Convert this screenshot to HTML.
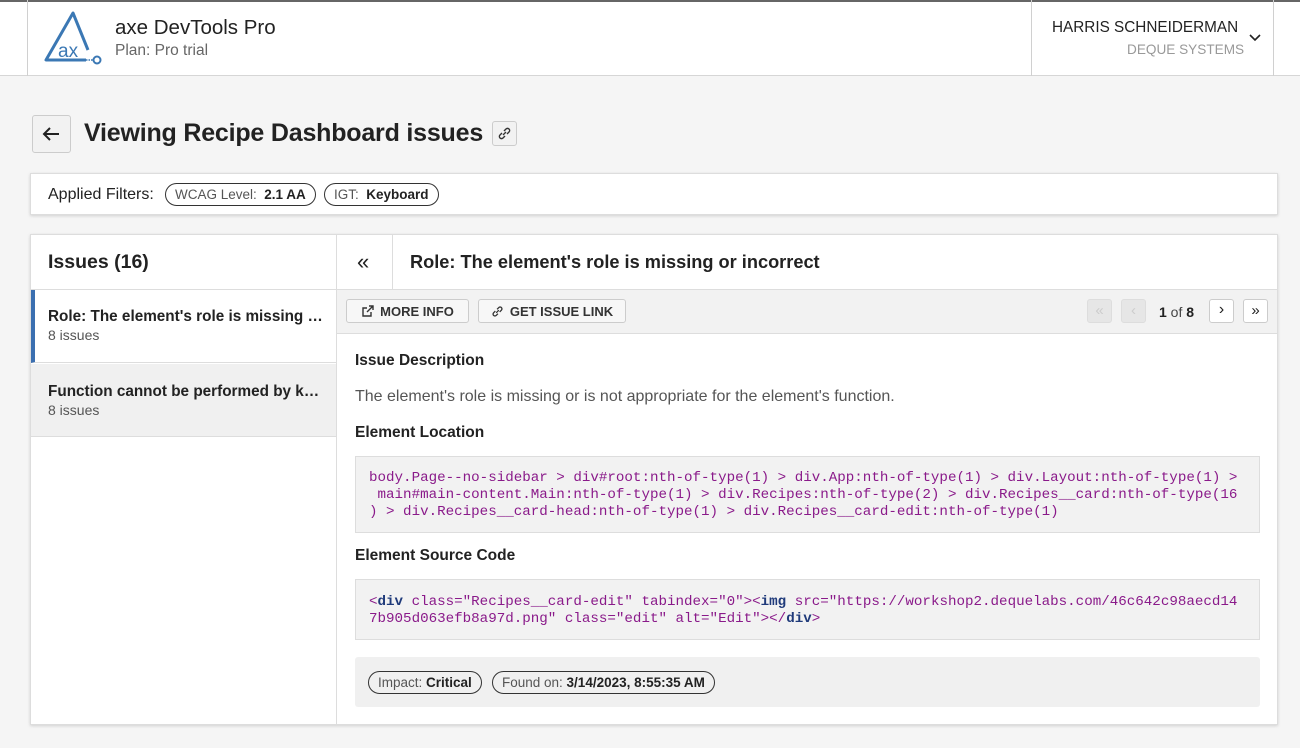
<!DOCTYPE html>
<html><head><meta charset="utf-8"><style>
*{box-sizing:border-box;margin:0;padding:0}
body{width:1300px;height:748px;background:#f5f5f5;font-family:"Liberation Sans",Arial,sans-serif;color:#222;position:relative;overflow:hidden}
.a{position:absolute;white-space:nowrap}
.hdr{left:0;top:0;width:1300px;height:76px;background:#fff;border-top:2px solid #666;border-bottom:1px solid #d6d6d6}
.vl{top:0;width:1px;height:76px;background:#d0d0d0}
.btn{background:#f2f2f2;border:1px solid #ccc;border-radius:3px}
.pill{display:inline-block;border:1px solid #333;border-radius:12px;padding:2px 9px;font-size:13.5px;color:#555;line-height:17px}
.pill b{color:#222}
.code{font-family:"Liberation Mono",monospace;font-size:14.2px;line-height:17px;color:#8a1a8a;white-space:pre;background:#f2f2f2;border:1px solid #ddd}
.code b{color:#1f3a7a}
.tb{font-size:13px;font-weight:bold;color:#333;display:flex;align-items:center;justify-content:center;gap:6px}
.h{font-size:15.5px;font-weight:bold;color:#222}
</style></head><body>
<div class="a hdr"></div>
<div class="a vl" style="left:27px"></div>
<div class="a vl" style="left:1031px"></div>
<div class="a vl" style="left:1273px"></div>
<svg class="a" style="left:44px;top:10px" width="60" height="56" viewBox="0 0 60 56">
<path d="M44 40 L29 3 L2 50 L42 50" fill="none" stroke="#3b78b4" stroke-width="3" stroke-linejoin="round"/>
<path d="M42 50 L50 50" stroke="#3b78b4" stroke-width="1.5" stroke-dasharray="1.5 1"/>
<circle cx="53" cy="50" r="3.5" fill="#fff" stroke="#3b78b4" stroke-width="2"/>
<text x="14" y="47" font-family="Liberation Sans" font-size="19" fill="#3b78b4">ax</text>
</svg>
<div class="a" style="left:115px;top:16px;font-size:20.5px;color:#222">axe DevTools Pro</div>
<div class="a" style="left:115px;top:42px;font-size:15.5px;color:#666">Plan: Pro trial</div>
<div class="a" style="left:1052px;top:19px;font-size:15.3px;color:#222">HARRIS SCHNEIDERMAN</div>
<div class="a" style="left:1127px;top:42px;font-size:13.6px;color:#999">DEQUE SYSTEMS</div>
<svg class="a" style="left:1248px;top:33px" width="14" height="10"><path d="M2 2 L7 7 L12 2" fill="none" stroke="#222" stroke-width="1.6"/></svg>

<div class="a btn" style="left:32px;top:115px;width:39px;height:38px"></div>
<svg class="a" style="left:41px;top:124px" width="20" height="20"><path d="M18 10H3M9 4L3 10L9 16" fill="none" stroke="#222" stroke-width="2"/></svg>
<div class="a" style="left:84px;top:119px;font-size:25px;font-weight:bold;color:#222;letter-spacing:-0.2px">Viewing Recipe Dashboard issues</div>
<div class="a btn" style="left:492px;top:121px;width:25px;height:25px"></div>
<svg class="a" style="left:497px;top:126px" width="15" height="15" viewBox="0 0 15 15"><path d="M6 9L9 6M5 7L3 9a2 2 0 0 0 3 3l2-2M10 8l2-2a2 2 0 0 0-3-3L7 5" fill="none" stroke="#333" stroke-width="1.4"/></svg>

<div class="a" style="left:30px;top:173px;width:1248px;height:42px;background:#fff;border:1px solid #ddd;box-shadow:0 1px 3px rgba(0,0,0,.15)"></div>
<div class="a" style="left:48px;top:186px;font-size:16px;color:#222">Applied Filters:</div>
<div class="a" style="left:165px;top:183px"><span class="pill">WCAG Level:&nbsp; <b>2.1 AA</b></span></div>
<div class="a" style="left:324px;top:183px"><span class="pill">IGT:&nbsp; <b>Keyboard</b></span></div>

<div class="a" style="left:30px;top:234px;width:1248px;height:491px;background:#fff;border:1px solid #ddd;box-shadow:0 1px 3px rgba(0,0,0,.15)"></div>
<div class="a" style="left:30px;top:289px;width:1248px;height:1px;background:#ddd"></div>
<div class="a" style="left:336px;top:234px;width:1px;height:491px;background:#ddd"></div>
<div class="a" style="left:392px;top:234px;width:1px;height:55px;background:#ddd"></div>
<div class="a" style="left:48px;top:251px;font-size:19.5px;font-weight:bold;color:#222">Issues (16)</div>
<div class="a" style="left:357px;top:249px;font-size:22px;color:#222">«</div>
<div class="a" style="left:410px;top:252px;font-size:18.2px;font-weight:bold;color:#222">Role: The element's role is missing or incorrect</div>

<div class="a" style="left:31px;top:290px;width:305px;height:73px;background:#fff;border-left:4px solid #3b6fb0;border-bottom:1px solid #ddd"></div>
<div class="a" style="left:48px;top:308px;font-size:15.3px;font-weight:bold;color:#222">Role: The element's role is missing …</div>
<div class="a" style="left:48px;top:327px;font-size:14px;color:#555">8 issues</div>
<div class="a" style="left:31px;top:364px;width:305px;height:73px;background:#f0f0f0;border-bottom:1px solid #ddd"></div>
<div class="a" style="left:48px;top:383px;font-size:15.3px;font-weight:bold;color:#222">Function cannot be performed by k…</div>
<div class="a" style="left:48px;top:402px;font-size:14px;color:#555">8 issues</div>

<div class="a" style="left:337px;top:290px;width:940px;height:44px;background:#f2f2f2;border-bottom:1px solid #ddd"></div>
<div class="a btn tb" style="left:346px;top:299px;width:123px;height:24px;background:#f7f7f7"><svg width="13" height="13" viewBox="0 0 13 13"><path d="M10 7v4H2V3h4M8 1h4v4M12 1L6 7" fill="none" stroke="#333" stroke-width="1.4"/></svg>MORE INFO</div>
<div class="a btn tb" style="left:478px;top:299px;width:148px;height:24px;background:#f7f7f7"><svg width="13" height="13" viewBox="0 0 15 15"><path d="M6 9L9 6M5 7L3 9a2 2 0 0 0 3 3l2-2M10 8l2-2a2 2 0 0 0-3-3L7 5" fill="none" stroke="#333" stroke-width="1.5"/></svg>GET ISSUE LINK</div>
<div class="a btn" style="left:1087px;top:299px;width:25px;height:24px;background:#e6e6e6;border-color:#ddd;color:#ccc;font-size:15px;text-align:center;line-height:21px">«</div>
<div class="a btn" style="left:1121px;top:299px;width:25px;height:24px;background:#e6e6e6;border-color:#ddd;color:#ccc;font-size:15px;text-align:center;line-height:21px">‹</div>
<div class="a" style="left:1159px;top:304px;font-size:14px;color:#444"><b style="color:#222">1</b> of <b style="color:#222">8</b></div>
<div class="a btn" style="left:1209px;top:299px;width:25px;height:24px;background:#fff;font-size:16px;text-align:center;line-height:20px">›</div>
<div class="a btn" style="left:1243px;top:299px;width:25px;height:24px;background:#fff;font-size:15px;text-align:center;line-height:21px">»</div>

<div class="a h" style="left:355px;top:352px">Issue Description</div>
<div class="a" style="left:355px;top:388px;font-size:16px;color:#555">The element's role is missing or is not appropriate for the element's function.</div>
<div class="a h" style="left:355px;top:424px">Element Location</div>
<div class="a code" style="left:355px;top:456px;width:905px;height:77px;padding:13px 0 0 13px">body.Page--no-sidebar &gt; div#root:nth-of-type(1) &gt; div.App:nth-of-type(1) &gt; div.Layout:nth-of-type(1) &gt;
 main#main-content.Main:nth-of-type(1) &gt; div.Recipes:nth-of-type(2) &gt; div.Recipes__card:nth-of-type(16
) &gt; div.Recipes__card-head:nth-of-type(1) &gt; div.Recipes__card-edit:nth-of-type(1)</div>
<div class="a h" style="left:355px;top:547px">Element Source Code</div>
<div class="a code" style="left:355px;top:579px;width:905px;height:61px;padding:14px 0 0 13px">&lt;<b>div</b> class="Recipes__card-edit" tabindex="0"&gt;&lt;<b>img</b> src="https://workshop2.dequelabs.com/46c642c98aecd14
7b905d063efb8a97d.png" class="edit" alt="Edit"&gt;&lt;/<b>div</b>&gt;</div>
<div class="a" style="left:355px;top:657px;width:905px;height:50px;background:#f0f0f0;border-radius:3px"></div>
<div class="a" style="left:368px;top:671px"><span class="pill">Impact: <b>Critical</b></span></div>
<div class="a" style="left:492px;top:671px"><span class="pill">Found on: <b>3/14/2023, 8:55:35 AM</b></span></div>
</body></html>
